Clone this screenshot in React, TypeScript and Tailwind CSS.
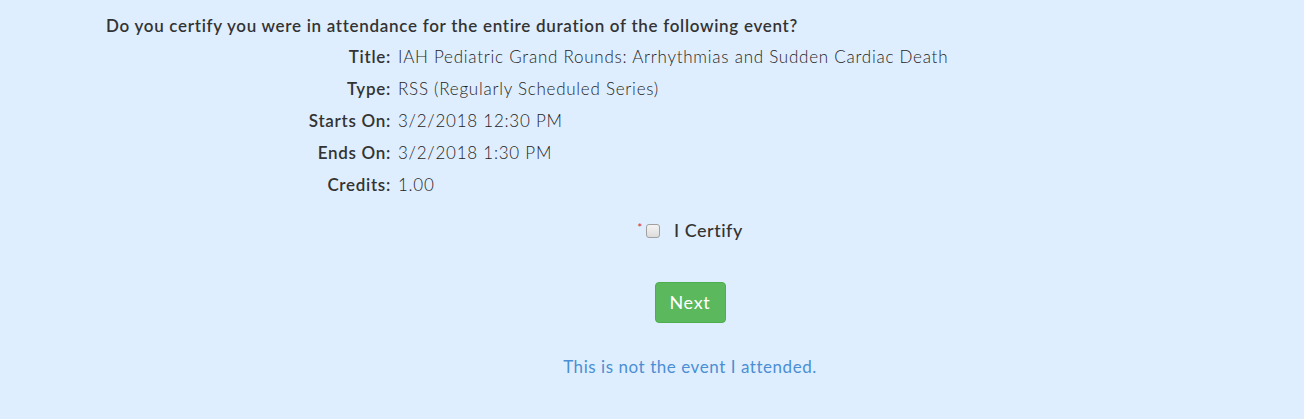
const rows: [string, string][] = [
  ['Title:', 'IAH Pediatric Grand Rounds: Arrhythmias and Sudden Cardiac Death'],
  ['Type:', 'RSS (Regularly Scheduled Series)'],
  ['Starts On:', '3/2/2018 12:30 PM'],
  ['Ends On:', '3/2/2018 1:30 PM'],
  ['Credits:', '1.00'],
]

export default function App() {
  return (
    <div className="min-h-[419px] bg-[#dfeefe] pl-[106px] pr-[30px] pt-[14px] text-[#333] tracking-[0.7px] font-['Lato','Open_Sans',sans-serif]">
      <p className="text-[17px] font-semibold leading-[24px]">
        Do you certify you were in attendance for the entire duration of the following event?
      </p>
      <div className="mt-[3px] flex flex-col">
        {rows.map(([label, value]) => (
          <div key={label} className="flex h-[32px] items-center text-[17px]">
            <span className="w-[285px] shrink-0 text-right font-semibold">{label}</span>
            <span className="ml-[7px] font-light tracking-[0.75px] text-[#1f1f1f]">{value}</span>
          </div>
        ))}
      </div>
      <div className="mt-[16px] flex items-center justify-center">
        <span className="mr-[3px] -mt-[5px] text-[12px] leading-none text-[#d9312b]">*</span>
        <span className="h-[14px] w-[14px] rounded-[3px] border border-[#a0a0a0] bg-gradient-to-b from-[#f4f4f4] to-[#dcdcdc]" />
        <span className="ml-[14px] text-[18px] font-medium tracking-[0.5px]">I Certify</span>
      </div>
      <div className="mt-[38px] flex justify-center">
        <button className="h-[41px] w-[71px] rounded-[4px] border border-[#4cae4c] bg-[#5cb85c] text-[18px] font-normal text-white">
          Next
        </button>
      </div>
      <div className="mt-[31px] flex justify-center">
        <a className="text-[17px] font-normal tracking-[0.55px] text-[#4a8fd4]">This is not the event I attended.</a>
      </div>
    </div>
  )
}
